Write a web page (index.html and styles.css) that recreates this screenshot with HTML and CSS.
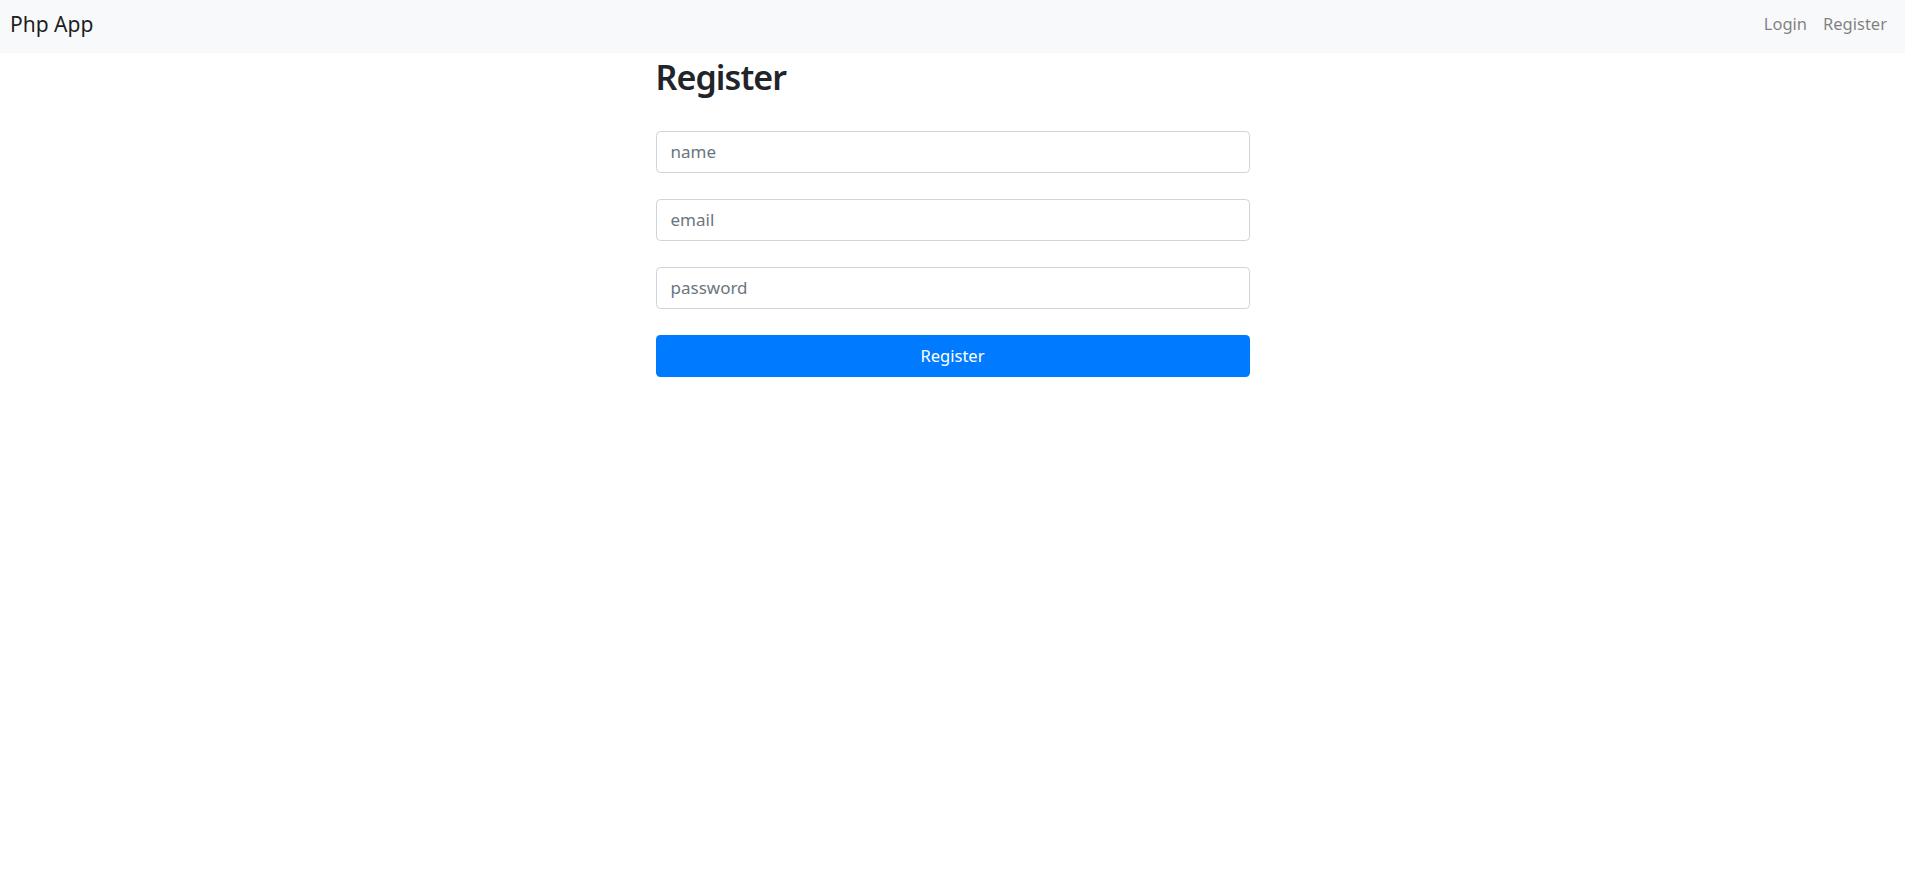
FILE: index.html
```html
<!DOCTYPE html>
<html lang="en">
<head>
<meta charset="utf-8">
<title>Php App</title>
<link rel="stylesheet" href="styles.css">
</head>
<body>
<nav class="navbar">
  <a class="brand" href="#">Php App</a>
  <div class="nav-links">
    <a class="nav-link" href="#">Login</a>
    <a class="nav-link" href="#">Register</a>
  </div>
</nav>
<main class="container">
  <h2 class="title">Register</h2>
  <form class="form">
    <input class="field" type="text" placeholder="name">
    <input class="field" type="email" placeholder="email">
    <input class="field" type="password" placeholder="password">
    <button class="btn" type="button">Register</button>
  </form>
</main>
</body>
</html>
```
FILE: styles.css
```css
* { box-sizing: border-box; }
html, body { margin: 0; padding: 0; }
body {
  font-family: "Noto Sans", "Open Sans", sans-serif;
  font-size: 17px;
  color: #212529;
  background: #fff;
}
.navbar {
  height: 53px;
  background: #f8f9fa;
  display: flex;
  align-items: center;
  justify-content: space-between;
  padding: 0 18px 6px 10px;
}
.brand {
  font-size: 21px;
  color: rgba(0,0,0,.9);
  text-decoration: none;
}
.nav-links { display: flex; gap: 16px; }
.nav-link {
  color: rgba(0,0,0,.5);
  text-decoration: none;
  font-size: 16.5px;
}
.container {
  width: 594px;
  margin: 0 auto;
}
.title {
  font-size: 34px;
  font-weight: 600;
  letter-spacing: -0.9px;
  line-height: 1.2;
  margin: 0 0 33px;
  padding-top: 4px;
}
.form {
  display: flex;
  flex-direction: column;
  gap: 26px;
}
.field {
  height: 42px;
  border: 1px solid #ced4da;
  border-radius: 4.4px;
  padding: 0 14px;
  font-family: inherit;
  font-size: 17px;
  color: #495057;
}
.field::placeholder { color: #6c757d; }
.btn {
  height: 42px;
  border: 0;
  border-radius: 4.4px;
  background: #007bff;
  color: #fff;
  font-family: inherit;
  font-size: 16.5px;
}
```
